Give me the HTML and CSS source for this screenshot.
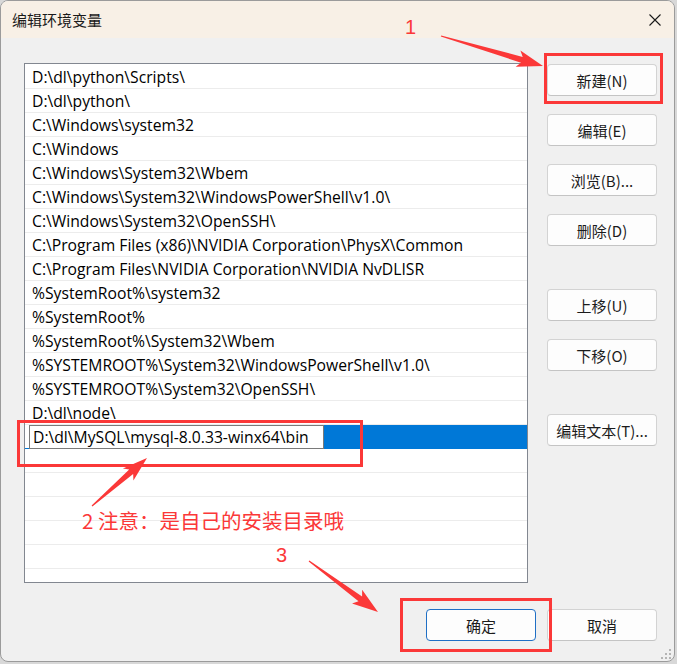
FILE: index.html
```html
<!DOCTYPE html>
<html lang="zh-CN">
<head>
<meta charset="utf-8">
<title>编辑环境变量</title>
<link rel="stylesheet" href="styles.css">
</head>
<body>
<div class="window">
  <div class="titlebar">
    <span class="title">编辑环境变量</span>
    <span class="close"><svg width="12" height="12" viewBox="0 0 12 12"><path d="M0.5 0.5 L11.5 11.5 M11.5 0.5 L0.5 11.5" stroke="#1a1a1a" stroke-width="1.1" fill="none"/></svg></span>
  </div>
  <div class="content">
    <div class="list">
      <div class="row">D:\dl\python\Scripts\</div>
      <div class="row">D:\dl\python\</div>
      <div class="row">C:\Windows\system32</div>
      <div class="row">C:\Windows</div>
      <div class="row">C:\Windows\System32\Wbem</div>
      <div class="row">C:\Windows\System32\WindowsPowerShell\v1.0\</div>
      <div class="row">C:\Windows\System32\OpenSSH\</div>
      <div class="row">C:\Program Files (x86)\NVIDIA Corporation\PhysX\Common</div>
      <div class="row">C:\Program Files\NVIDIA Corporation\NVIDIA NvDLISR</div>
      <div class="row">%SystemRoot%\system32</div>
      <div class="row">%SystemRoot%</div>
      <div class="row">%SystemRoot%\System32\Wbem</div>
      <div class="row">%SYSTEMROOT%\System32\WindowsPowerShell\v1.0\</div>
      <div class="row">%SYSTEMROOT%\System32\OpenSSH\</div>
      <div class="row">D:\dl\node\</div>
      <div class="row selected"><span class="edit">D:\dl\MySQL\mysql-8.0.33-winx64\bin</span></div>
      <div class="row"></div>
      <div class="row"></div>
      <div class="row"></div>
      <div class="row"></div>
      <div class="row"></div>
      <div class="row"></div>
    </div>
    <div class="side">
      <button class="btn">新建(N)</button>
      <button class="btn">编辑(E)</button>
      <button class="btn">浏览(B)...</button>
      <button class="btn">删除(D)</button>
      <button class="btn gap">上移(U)</button>
      <button class="btn">下移(O)</button>
      <button class="btn gap">编辑文本(T)...</button>
    </div>
  </div>
  <div class="footer">
    <button class="btn primary">确定</button>
    <button class="btn">取消</button>
  </div>
  <svg class="grip" width="12" height="12" viewBox="0 0 12 12">
    <rect x="9" y="1" width="2" height="2"/>
    <rect x="5" y="5" width="2" height="2"/>
    <rect x="9" y="5" width="2" height="2"/>
    <rect x="1" y="9" width="2" height="2"/>
    <rect x="5" y="9" width="2" height="2"/>
    <rect x="9" y="9" width="2" height="2"/>
  </svg>
</div>

<div class="mark m1"></div>
<div class="mark m2"></div>
<div class="mark m3"></div>
<span class="note n1">1</span>
<span class="note n2">2 注意：是自己的安装目录哦</span>
<span class="note n3">3</span>
<svg class="arrows" width="677" height="664" viewBox="0 0 677 664">
  <g transform="translate(441 36) rotate(16.39)">
    <polygon points="0,-0.6 84.3,-3 80.3,-8.5 106.3,0 80.3,8.5 84.3,3 0,0.6"/>
  </g>
  <g transform="translate(92 506) rotate(-41.11)">
    <polygon points="0,-0.6 52,-3 48,-8 73,0 48,8 52,3 0,0.6"/>
  </g>
  <g transform="translate(309 561) rotate(36.47)">
    <polygon points="0,-0.6 63.8,-3 59.8,-8.5 85.8,0 59.8,8.5 63.8,3 0,0.6"/>
  </g>
</svg>
</body>
</html>
```

FILE: styles.css
```css
body {
  margin: 0;
  width: 677px;
  height: 664px;
  position: relative;
  overflow: hidden;
  background: #d8d8d8;
  font-family: "Noto Sans CJK SC", sans-serif;
}

.window {
  width: 675px;
  height: 662px;
  box-sizing: border-box;
  border: 1px solid #9b9b9b;
  border-radius: 8px;
  background: #f0f0f0;
  overflow: hidden;
  position: relative;
  display: flex;
  flex-direction: column;
}

.titlebar {
  height: 37px;
  flex: none;
  background: #f8f0e6;
  display: flex;
  align-items: center;
  justify-content: space-between;
  padding: 0 13px 0 11px;
}

.title {
  font-size: 15px;
  color: #1a1a1a;
}

.close svg {
  display: block;
}

.content {
  display: grid;
  grid-template-columns: 504px 110px;
  column-gap: 19px;
  padding: 25px 0 0 23px;
}

.list {
  height: 520px;
  box-sizing: border-box;
  border: 1px solid #828790;
  background: #fff;
  padding-top: 1px;
  overflow: hidden;
  font-family: "Open Sans", sans-serif;
  font-size: 15.7px;
}

.row {
  height: 24px;
  box-sizing: border-box;
  border-bottom: 1px solid #ececec;
  padding-left: 7px;
  line-height: 24px;
  white-space: nowrap;
  color: #000;
}

.row.selected {
  background: linear-gradient(to right, #fff 4px, #0078d7 4px);
  border-bottom-color: #0078d7;
  padding-left: 4px;
}

.edit {
  display: block;
  width: 295px;
  height: 24px;
  box-sizing: border-box;
  border: 1px solid #7a7a7a;
  background: #fff;
  padding-left: 3px;
  line-height: 22px;
}

.side {
  display: flex;
  flex-direction: column;
  padding-top: 1px;
}

.btn {
  width: 110px;
  height: 32px;
  box-sizing: border-box;
  border: 1px solid #d3d3d3;
  border-bottom-color: #c4c4c4;
  border-radius: 4px;
  background: #fdfdfd;
  font-family: "Noto Sans CJK SC", sans-serif;
  font-size: 15px;
  color: #1b1b1b;
  padding: 0;
}

.side .btn + .btn {
  margin-top: 18px;
}

.side .btn.gap {
  margin-top: 43px;
}

.footer {
  display: flex;
  justify-content: flex-end;
  gap: 11px;
  padding: 26px 17px 0 0;
}

.btn.primary {
  border-color: #1f6fc5;
}

.grip {
  position: absolute;
  right: 2px;
  bottom: 1px;
  fill: #b4b4b4;
}

.mark {
  position: absolute;
  box-sizing: border-box;
  border: 3px solid #fb3838;
}

.m1 {
  left: 544px;
  top: 53px;
  width: 119px;
  height: 51px;
}

.m2 {
  left: 17px;
  top: 420px;
  width: 346px;
  height: 47px;
}

.m3 {
  left: 400px;
  top: 598px;
  width: 152px;
  height: 54px;
}

.note {
  position: absolute;
  color: #fb3838;
  font-size: 20px;
  line-height: 20px;
  white-space: nowrap;
}

.n1 {
  left: 405px;
  top: 17px;
  font-family: "Liberation Sans", sans-serif;
}

.n3 {
  left: 276px;
  top: 545px;
  font-family: "Liberation Sans", sans-serif;
}

.n2 {
  left: 82px;
  top: 510px;
  font-size: 20.5px;
  font-family: "Noto Sans CJK SC", sans-serif;
}

.arrows {
  position: absolute;
  left: 0;
  top: 0;
  fill: #fb3838;
}
```
